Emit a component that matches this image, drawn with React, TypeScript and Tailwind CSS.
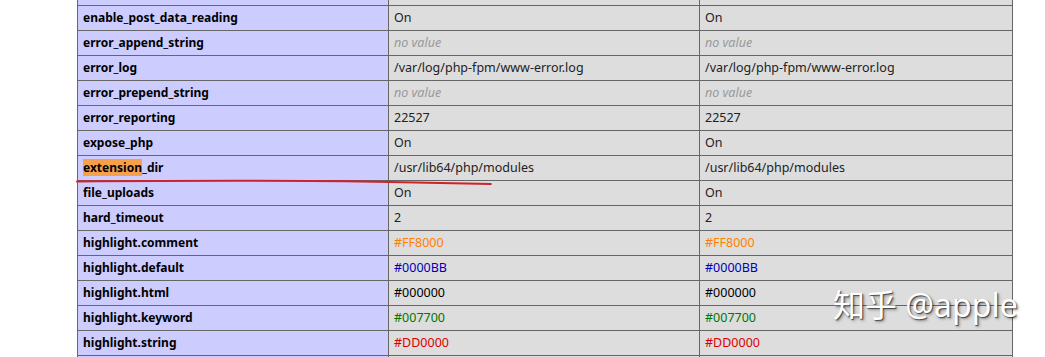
import React from "react";

type Row = {
  name: string;
  local: string;
  master: string;
  kind?: "none" | "color";
  color?: string;
};

const rows: Row[] = [
  { name: "enable_post_data_reading", local: "On", master: "On" },
  { name: "error_append_string", local: "no value", master: "no value", kind: "none" },
  { name: "error_log", local: "/var/log/php-fpm/www-error.log", master: "/var/log/php-fpm/www-error.log" },
  { name: "error_prepend_string", local: "no value", master: "no value", kind: "none" },
  { name: "error_reporting", local: "22527", master: "22527" },
  { name: "expose_php", local: "On", master: "On" },
  { name: "extension_dir", local: "/usr/lib64/php/modules", master: "/usr/lib64/php/modules" },
  { name: "file_uploads", local: "On", master: "On" },
  { name: "hard_timeout", local: "2", master: "2" },
  { name: "highlight.comment", local: "#FF8000", master: "#FF8000", kind: "color", color: "text-[#FF8000]" },
  { name: "highlight.default", local: "#0000BB", master: "#0000BB", kind: "color", color: "text-[#0000BB]" },
  { name: "highlight.html", local: "#000000", master: "#000000", kind: "color", color: "text-[#000000]" },
  { name: "highlight.keyword", local: "#007700", master: "#007700", kind: "color", color: "text-[#007700]" },
  { name: "highlight.string", local: "#DD0000", master: "#DD0000", kind: "color", color: "text-[#DD0000]" },
];

function Value({ row, text }: { row: Row; text: string }) {
  if (row.kind === "none") {
    return <i className="text-[#999]">{text}</i>;
  }
  if (row.kind === "color") {
    return <span className={row.color}>{text}</span>;
  }
  return <span>{text}</span>;
}

const cell = "border border-[#666] px-[5px] py-0 leading-[24px]";

const App: React.FC = () => {
  return (
    <div
      className="relative h-[357px] w-[1045px] overflow-hidden bg-white text-[12.5px] text-[#222]"
      style={{ fontFamily: '"Noto Sans", "Noto Sans CJK SC", sans-serif' }}
    >
      <table className="ml-[77px] -mt-[20px] w-[935px] table-fixed border-collapse">
        <colgroup>
          <col className="w-[311px]" />
          <col className="w-[311px]" />
          <col className="w-[313px]" />
        </colgroup>
        <tbody>
          {/* row scrolled off the top */}
          <tr className="h-[25px]">
            <td className={`${cell} bg-[#ccf]`} />
            <td className={`${cell} bg-[#ddd]`} />
            <td className={`${cell} bg-[#ddd]`} />
          </tr>
          {rows.map((row) => (
            <tr key={row.name} className="h-[25px]">
              <td className={`${cell} bg-[#ccf] text-[12px] font-bold text-black`}>
                {row.name === "extension_dir" ? (
                  <>
                    <span className="bg-[#f7a04b]">extension</span>_dir
                  </>
                ) : (
                  row.name
                )}
              </td>
              <td className={`${cell} bg-[#ddd]`}>
                <Value row={row} text={row.local} />
              </td>
              <td className={`${cell} bg-[#ddd]`}>
                <Value row={row} text={row.master} />
              </td>
            </tr>
          ))}
          <tr className="h-[25px]">
            <td className={`${cell} bg-[#ccf]`} />
            <td className={`${cell} bg-[#ddd]`} />
            <td className={`${cell} bg-[#ddd]`} />
          </tr>
        </tbody>
      </table>

      {/* hand-drawn red underline */}
      <svg className="pointer-events-none absolute left-0 top-0" width="1045" height="357">
        <path
          d="M77 181.5 Q 280 180 390 182 T 490 184"
          fill="none"
          stroke="#d0222a"
          strokeWidth="2"
          strokeLinecap="round"
        />
      </svg>

      {/* watermark */}
      <div
        className="pointer-events-none absolute left-[833px] top-[289px] text-[32px] leading-none text-white"
        style={{ textShadow: "1px 1px 1px rgba(0,0,0,0.6), 2px 2px 3px rgba(0,0,0,0.35)" }}
      >
        知乎 @apple
      </div>
    </div>
  );
};

export default App;
